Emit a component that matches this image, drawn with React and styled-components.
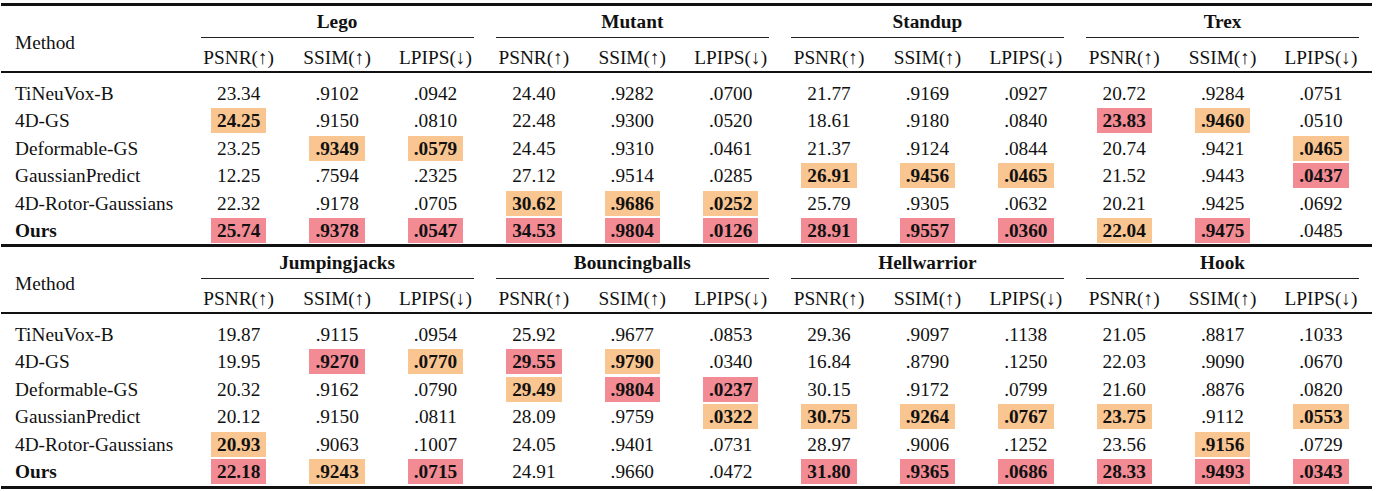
import React from "react";
import styled, { createGlobalStyle } from "styled-components";

const Global = createGlobalStyle`
  html, body { margin: 0; padding: 0; background: #ffffff; }
  body {
    font-family: "Liberation Serif", "Times New Roman", serif;
    color: #111111;
  }
`;

const COLS = "188.5px repeat(12, 98.4px)";
const ORANGE = "#f9c590";
const RED = "#f28b94";

const Page = styled.div`
  width: 1371px;
  padding: 3px 0 0 1px;
  display: flex;
  flex-direction: column;
  font-size: 19.3px;
`;

const Rule = styled.div`
  height: ${(p) => p.$h}px;
  background: #111111;
`;

const Head = styled.div`
  display: grid;
  grid-template-columns: ${COLS};
  grid-template-rows: 31.5px 1px 33px;
`;

const MethodHead = styled.div`
  grid-column: 1;
  grid-row: 1 / 4;
  padding: 25.5px 0 0 14px;
  line-height: 23px;
`;

const Group = styled.div`
  grid-row: 1;
  grid-column: ${(p) => p.$col} / span 3;
  font-weight: bold;
  text-align: center;
  line-height: 31.5px;
`;

const CmidRule = styled.div`
  grid-row: 2;
  grid-column: ${(p) => p.$col} / span 3;
  margin: 0 11px;
  background: #222222;
`;

const Metric = styled.div`
  grid-row: 3;
  grid-column: ${(p) => p.$col};
  align-self: end;
  text-align: center;
  line-height: 23px;
  padding-bottom: 2px;
`;

const Body = styled.div`
  display: flex;
  flex-direction: column;
  padding-top: 6.8px;
`;

const Row = styled.div`
  display: grid;
  grid-template-columns: ${COLS};
  height: 27.5px;
  align-items: center;
`;

const Name = styled.div`
  padding-left: 14px;
  line-height: 25px;
  font-weight: ${(p) => (p.$bold ? "bold" : "normal")};
`;

const Cell = styled.div`
  display: flex;
  justify-content: center;
`;

const Value = styled.span`
  display: inline-block;
  height: 25px;
  line-height: 25px;
  padding: 0 6px;
  background: ${(p) => (p.$hl === "o" ? ORANGE : p.$hl === "r" ? RED : "transparent")};
  font-weight: ${(p) => (p.$hl ? "bold" : "normal")};
`;

const METRICS = ["PSNR(↑)", "SSIM(↑)", "LPIPS(↓)"];
const METHODS = [
  "TiNeuVox-B",
  "4D-GS",
  "Deformable-GS",
  "GaussianPredict",
  "4D-Rotor-Gaussians",
  "Ours",
];

const TABLES = [
  {
    groups: ["Lego", "Mutant", "Standup", "Trex"],
    rows: [
      "23.34 .9102 .0942 24.40 .9282 .0700 21.77 .9169 .0927 20.72 .9284 .0751",
      "24.25o .9150 .0810 22.48 .9300 .0520 18.61 .9180 .0840 23.83r .9460o .0510",
      "23.25 .9349o .0579o 24.45 .9310 .0461 21.37 .9124 .0844 20.74 .9421 .0465o",
      "12.25 .7594 .2325 27.12 .9514 .0285 26.91o .9456o .0465o 21.52 .9443 .0437r",
      "22.32 .9178 .0705 30.62o .9686o .0252o 25.79 .9305 .0632 20.21 .9425 .0692",
      "25.74r .9378r .0547r 34.53r .9804r .0126r 28.91r .9557r .0360r 22.04o .9475r .0485",
    ],
    bottom: 2.5,
  },
  {
    groups: ["Jumpingjacks", "Bouncingballs", "Hellwarrior", "Hook"],
    rows: [
      "19.87 .9115 .0954 25.92 .9677 .0853 29.36 .9097 .1138 21.05 .8817 .1033",
      "19.95 .9270r .0770o 29.55r .9790o .0340 16.84 .8790 .1250 22.03 .9090 .0670",
      "20.32 .9162 .0790 29.49o .9804r .0237r 30.15 .9172 .0799 21.60 .8876 .0820",
      "20.12 .9150 .0811 28.09 .9759 .0322o 30.75o .9264o .0767o 23.75o .9112 .0553o",
      "20.93o .9063 .1007 24.05 .9401 .0731 28.97 .9006 .1252 23.56 .9156o .0729",
      "22.18r .9243o .0715r 24.91 .9660 .0472 31.80r .9365r .0686r 28.33r .9493r .0343r",
    ],
    bottom: 3,
  },
];

function parse(token) {
  const last = token[token.length - 1];
  if (last === "o" || last === "r") return { text: token.slice(0, -1), hl: last };
  return { text: token, hl: null };
}

function Block({ table }) {
  return (
    <>
      <Head>
        <MethodHead>Method</MethodHead>
        {table.groups.map((g, i) => (
          <React.Fragment key={g}>
            <Group $col={2 + i * 3}>{g}</Group>
            <CmidRule $col={2 + i * 3} />
            {METRICS.map((m, j) => (
              <Metric key={m} $col={2 + i * 3 + j}>
                {m}
              </Metric>
            ))}
          </React.Fragment>
        ))}
      </Head>
      <Rule $h={1.5} />
      <Body>
        {table.rows.map((r, i) => (
          <Row key={METHODS[i]}>
            <Name $bold={METHODS[i] === "Ours"}>{METHODS[i]}</Name>
            {r.split(" ").map((tok, j) => {
              const v = parse(tok);
              return (
                <Cell key={j}>
                  <Value $hl={v.hl}>{v.text}</Value>
                </Cell>
              );
            })}
          </Row>
        ))}
      </Body>
      <Rule $h={table.bottom} />
    </>
  );
}

export default function App() {
  return (
    <>
      <Global />
      <Page>
        <Rule $h={2.5} />
        {TABLES.map((t, i) => (
          <Block key={i} table={t} />
        ))}
      </Page>
    </>
  );
}
